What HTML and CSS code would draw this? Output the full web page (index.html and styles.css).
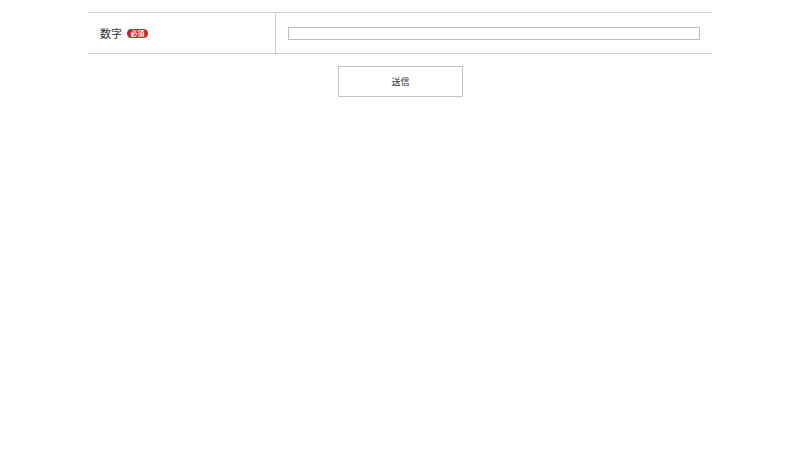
FILE: index.html
```html
<!DOCTYPE html>
<html lang="ja">
<head>
<meta charset="utf-8">
<title>フォーム</title>
<link rel="stylesheet" href="styles.css">
</head>
<body>
<form class="form">
  <div class="table">
    <div class="th">
      <span class="label">数字</span>
      <span class="badge">必須</span>
    </div>
    <div class="td">
      <input class="input" type="text">
    </div>
  </div>
  <div class="actions">
    <button class="submit" type="button">送信</button>
  </div>
</form>
</body>
</html>
```

FILE: styles.css
```css
html, body {
  margin: 0;
  padding: 0;
  background: #fff;
}
body {
  font-family: "Noto Sans CJK JP", "Noto Sans", sans-serif;
  color: #333;
}
.form {
  width: 624px;
  margin: 12px auto 0;
}
.table {
  display: grid;
  grid-template-columns: 188px 1fr;
  border-top: 1px solid #cfcfcf;
  border-bottom: 1px solid #cfcfcf;
  height: 42px;
  box-sizing: border-box;
}
.th {
  display: flex;
  align-items: center;
  gap: 5px;
  padding-left: 12px;
  padding-top: 1px;
  border-right: 1px solid #cfcfcf;
}
.label {
  font-size: 11px;
  line-height: 1;
  color: #333;
}
.badge {
  display: inline-flex;
  align-items: center;
  justify-content: center;
  width: 21px;
  height: 9px;
  border-radius: 5px;
  background: #d7191c;
  color: #fff;
  font-size: 7px;
  line-height: 1;
  font-weight: bold;
}
.td {
  display: flex;
  align-items: center;
  padding: 0 12px;
}
.input {
  width: 100%;
  height: 13px;
  box-sizing: border-box;
  border: 1px solid #bdbdbd;
  padding: 0;
  margin: 0;
  background: #fff;
  outline: none;
}
.actions {
  display: flex;
  justify-content: center;
  margin-top: 12px;
}
.submit {
  width: 125px;
  height: 31px;
  margin-left: 1px;
  background: #fff;
  border: 1px solid #c4c4c4;
  border-radius: 0;
  font-family: "Noto Sans CJK JP", "Noto Sans", sans-serif;
  font-size: 9px;
  color: #333;
  padding: 0;
}
```
